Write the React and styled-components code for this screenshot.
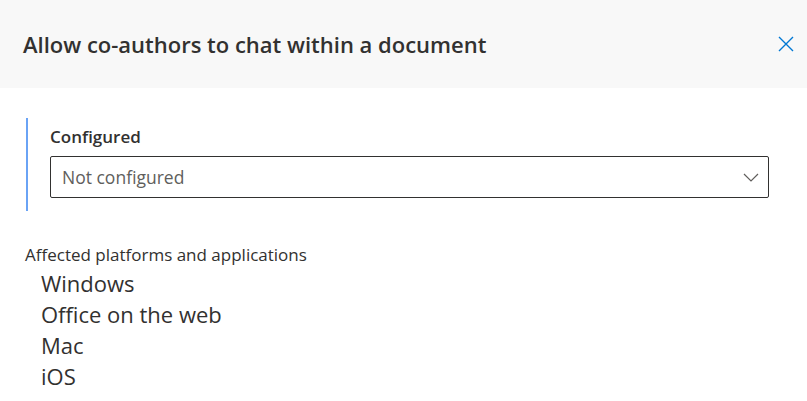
import React from "react";
import styled, { createGlobalStyle } from "styled-components";

const GlobalStyle = createGlobalStyle`
  body {
    margin: 0;
    background: #ffffff;
    font-family: "Open Sans", "Noto Sans", sans-serif;
    color: #323130;
  }
`;

const platforms = ["Windows", "Office on the web", "Mac", "iOS"];

export default function App() {
  return (
    <>
      <GlobalStyle />
      <Panel>
        <Header>
          <Title>Allow co-authors to chat within a document</Title>
          <CloseButton aria-label="Close">
            <svg width="16" height="16" viewBox="0 0 16 16">
              <path d="M1 1 L15 15 M15 1 L1 15" stroke="#0078d4" strokeWidth="1.4" fill="none" />
            </svg>
          </CloseButton>
        </Header>
        <Body>
          <Setting>
            <Label>Configured</Label>
            <Select>
              <span>Not configured</span>
              <svg width="16" height="9" viewBox="0 0 16 9">
                <path d="M1 1 L8 8 L15 1" stroke="#605e5c" strokeWidth="1.2" fill="none" />
              </svg>
            </Select>
          </Setting>
          <Affected>
            <AffectedTitle>Affected platforms and applications</AffectedTitle>
            <PlatformList>
              {platforms.map((p) => (
                <Platform key={p}>{p}</Platform>
              ))}
            </PlatformList>
          </Affected>
        </Body>
      </Panel>
    </>
  );
}

const Panel = styled.div`
  width: 807px;
  height: 401px;
  background: #ffffff;
  overflow: hidden;
`;

const Header = styled.div`
  height: 88px;
  background: #f8f8f8;
  display: flex;
  align-items: center;
  justify-content: space-between;
  padding: 0 12px 0 23px;
  box-sizing: border-box;
`;

const Title = styled.h1`
  margin: 0 0 1px;
  font-size: 22px;
  line-height: 30px;
  font-weight: 600;
  color: #323130;
`;

const CloseButton = styled.button`
  border: none;
  background: transparent;
  padding: 0;
  width: 16px;
  height: 16px;
  display: flex;
  margin-right: 1px;
`;

const Body = styled.div`
  padding: 30px 38px 0 25px;
`;

const Setting = styled.div`
  margin-left: 1px;
  border-left: 2px solid #6aa3f5;
  padding: 8px 0 13px 22px;
`;

const Label = styled.div`
  font-size: 17px;
  font-weight: 600;
  color: #323130;
  line-height: 22px;
  margin-bottom: 8px;
`;

const Select = styled.div`
  height: 42px;
  box-sizing: border-box;
  border: 1px solid #323130;
  border-radius: 2px;
  display: flex;
  align-items: center;
  justify-content: space-between;
  padding: 0 9px 0 11px;
  font-size: 17.5px;
  color: #605e5c;
`;

const Affected = styled.div`
  margin-top: 33px;
`;

const AffectedTitle = styled.div`
  font-size: 17px;
  line-height: 22px;
  color: #323130;
`;

const PlatformList = styled.div`
  padding: 2px 0 0 16px;
  display: flex;
  flex-direction: column;
`;

const Platform = styled.div`
  font-size: 22px;
  line-height: 31px;
  font-weight: 400;
  color: #323130;
`;
